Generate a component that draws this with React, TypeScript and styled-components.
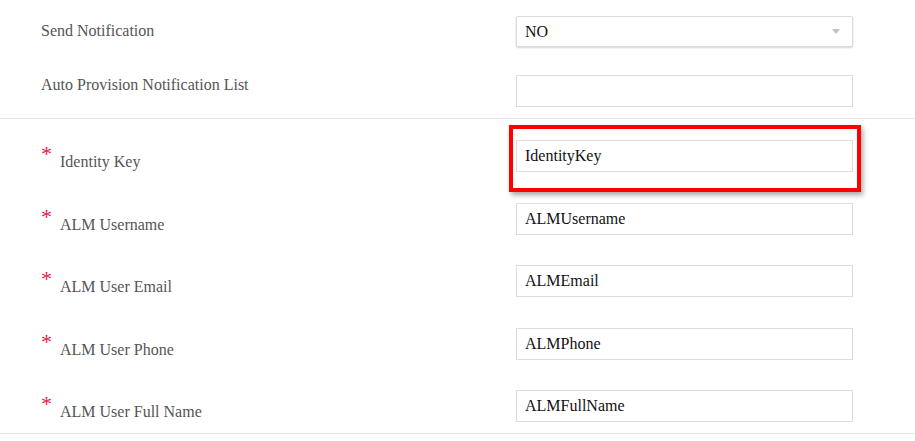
import React from 'react';
import styled, { createGlobalStyle } from 'styled-components';

const serif = `"Liberation Serif", "Times New Roman", Times, "DejaVu Serif", serif`;

const GlobalStyle = createGlobalStyle`
  html, body {
    margin: 0;
    padding: 0;
    background: #ffffff;
  }

  body {
    font-family: ${serif};
  }
`;

interface Field {
  label: string;
  value: string;
  required?: boolean;
  select?: boolean;
  highlight?: boolean;
  shift?: number;
}

const general: Field[] = [
  { label: 'Send Notification', value: 'NO', select: true, shift: 5 },
  { label: 'Auto Provision Notification List', value: '', shift: 0 },
];

const alm: Field[] = [
  { label: 'Identity Key', value: 'IdentityKey', required: true, highlight: true },
  { label: 'ALM Username', value: 'ALMUsername', required: true },
  { label: 'ALM User Email', value: 'ALMEmail', required: true },
  { label: 'ALM User Phone', value: 'ALMPhone', required: true },
  { label: 'ALM User Full Name', value: 'ALMFullName', required: true },
];

const FieldRow: React.FC<{ field: Field; shift: number }> = ({ field, shift }) => (
  <Row>
    <Label $shift={field.shift ?? shift}>
      {field.required && <Star>*</Star>}
      {field.label}
    </Label>
    <Control>
      {field.select ? (
        <Select>
          <span>{field.value}</span>
          <Caret />
        </Select>
      ) : (
        <Input readOnly value={field.value} />
      )}
      {field.highlight && <Highlight />}
    </Control>
  </Row>
);

export default function App() {
  return (
    <>
      <GlobalStyle />
      <Page>
        <Section $top={16} $bottom={11} $gap={27}>
          {general.map((f) => (
            <FieldRow key={f.label} field={f} shift={0} />
          ))}
        </Section>
        <Section $top={21} $bottom={11} $gap={30.5}>
          {alm.map((f) => (
            <FieldRow key={f.label} field={f} shift={12} />
          ))}
        </Section>
      </Page>
    </>
  );
}

const Page = styled.div`
  width: 915px;
  height: 441px;
  overflow: hidden;
  background: #fff;
`;

const Section = styled.div<{ $top: number; $bottom: number; $gap: number }>`
  display: grid;
  row-gap: ${(p) => p.$gap}px;
  padding: ${(p) => p.$top}px 0 ${(p) => p.$bottom}px;
  border-bottom: 1px solid #e6e6e6;
`;

const Row = styled.div`
  display: grid;
  grid-template-columns: 475px 337px;
  grid-template-rows: 32px;
  padding-left: 41px;
  align-items: start;
`;

const Label = styled.div<{ $shift: number }>`
  padding-top: ${(p) => p.$shift}px;
  font-family: ${serif};
  font-size: 16px;
  line-height: 20px;
  color: #555555;
  white-space: nowrap;
`;

const Star = styled.span`
  display: inline-block;
  width: 19px;
  font-size: 22px;
  line-height: 0;
  color: #e8174d;
  vertical-align: 6px;
`;

const Control = styled.div`
  position: relative;
`;

const boxBase = `
  box-sizing: border-box;
  width: 337px;
  height: 32px;
  border: 1px solid #dcdcdc;
  background: #fff;
  padding: 0 8px;
  font-family: ${serif};
  font-size: 16px;
  color: #111;
`;

const Input = styled.input`
  ${boxBase}
  display: block;
  margin: 0;
  outline: none;
  border-radius: 0;
`;

const Select = styled.div`
  ${boxBase}
  height: 31px;
  display: flex;
  align-items: center;
  justify-content: space-between;
  border-radius: 2px;
  box-shadow: 0 1px 2px rgba(0, 0, 0, 0.18);
`;

const Caret = styled.span`
  width: 0;
  height: 0;
  margin-right: 4px;
  border-left: 4px solid transparent;
  border-right: 4px solid transparent;
  border-top: 5px solid #c2c2c2;
`;

const Highlight = styled.div`
  position: absolute;
  left: -7px;
  top: -15px;
  right: -8px;
  bottom: -20px;
  border: 4px solid #ff0000;
  box-shadow: 2px 3px 5px rgba(0, 0, 0, 0.35);
  pointer-events: none;
`;
